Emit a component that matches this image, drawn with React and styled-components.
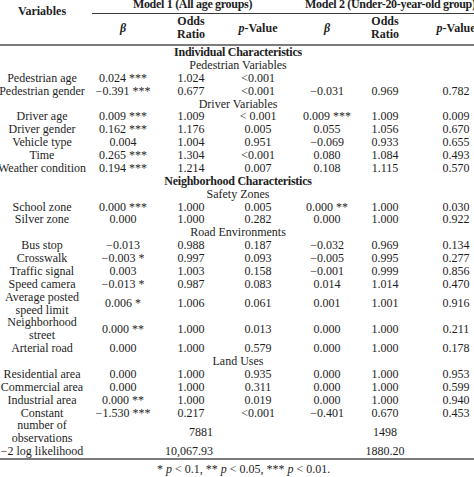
import styled, { createGlobalStyle } from "styled-components";

const GlobalStyle = createGlobalStyle`
  html, body {
    margin: 0;
    padding: 0;
    background: #fff;
    overflow: hidden;
  }
`;

// column widths, left to right (table starts 3px off the left edge)
const widths = [90, 72, 64, 70, 68, 48, 94];

const rows = [
  { section: "Individual Characteristics", bold: true },
  { section: "Pedestrian Variables" },
  { label: "Pedestrian age", m1: ["0.024 ***", "1.024", "<0.001"], m2: ["", "", ""] },
  { label: "Pedestrian gender", m1: ["−0.391 ***", "0.677", "<0.001"], m2: ["−0.031", "0.969", "0.782"] },
  { section: "Driver Variables" },
  { label: "Driver age", m1: ["0.009 ***", "1.009", "< 0.001"], m2: ["0.009 ***", "1.009", "0.009"] },
  { label: "Driver gender", m1: ["0.162 ***", "1.176", "0.005"], m2: ["0.055", "1.056", "0.670"] },
  { label: "Vehicle type", m1: ["0.004", "1.004", "0.951"], m2: ["−0.069", "0.933", "0.655"] },
  { label: "Time", m1: ["0.265 ***", "1.304", "<0.001"], m2: ["0.080", "1.084", "0.493"] },
  { label: "Weather condition", m1: ["0.194 ***", "1.214", "0.007"], m2: ["0.108", "1.115", "0.570"] },
  { section: "Neighborhood Characteristics", bold: true },
  { section: "Safety Zones" },
  { label: "School zone", m1: ["0.000 ***", "1.000", "0.005"], m2: ["0.000 **", "1.000", "0.030"] },
  { label: "Silver zone", m1: ["0.000", "1.000", "0.282"], m2: ["0.000", "1.000", "0.922"] },
  { section: "Road Environments" },
  { label: "Bus stop", m1: ["−0.013", "0.988", "0.187"], m2: ["−0.032", "0.969", "0.134"] },
  { label: "Crosswalk", m1: ["−0.003 *", "0.997", "0.093"], m2: ["−0.005", "0.995", "0.277"] },
  { label: "Traffic signal", m1: ["0.003", "1.003", "0.158"], m2: ["−0.001", "0.999", "0.856"] },
  { label: "Speed camera", m1: ["−0.013 *", "0.987", "0.083"], m2: ["0.014", "1.014", "0.470"] },
  { label: ["Average posted", "speed limit"], m1: ["0.006 *", "1.006", "0.061"], m2: ["0.001", "1.001", "0.916"] },
  { label: ["Neighborhood", "street"], m1: ["0.000 **", "1.000", "0.013"], m2: ["0.000", "1.000", "0.211"] },
  { label: "Arterial road", m1: ["0.000", "1.000", "0.579"], m2: ["0.000", "1.000", "0.178"] },
  { section: "Land Uses" },
  { label: "Residential area", m1: ["0.000", "1.000", "0.935"], m2: ["0.000", "1.000", "0.953"] },
  { label: "Commercial area", m1: ["0.000", "1.000", "0.311"], m2: ["0.000", "1.000", "0.599"] },
  { label: "Industrial area", m1: ["0.000 **", "1.000", "0.019"], m2: ["0.000", "1.000", "0.940"] },
  { label: "Constant", m1: ["−1.530 ***", "0.217", "<0.001"], m2: ["−0.401", "0.670", "0.453"] },
  { label: ["number of", "observations"], summary: ["7881", "1498"] },
  { label: "−2 log likelihood", summary: ["10,067.93", "1880.20"] },
];

const App = () => {
  return (
    <Frame>
      <GlobalStyle />
      <Table>
        <colgroup>
          {widths.map((w, i) => (
            <Col key={i} $w={w} />
          ))}
        </colgroup>
        <thead>
          <tr>
            <VarHead rowSpan={2}>Variables</VarHead>
            <GroupHead colSpan={3}>
              <ModelTitle $inset={5}>Model 1 (All age groups)</ModelTitle>
            </GroupHead>
            <GroupHead colSpan={3}>
              <ModelTitle $inset={0} $lead={12}>Model 2 (Under-20-year-old group)</ModelTitle>
            </GroupHead>
          </tr>
          <tr>
            <HeadCell><Ital>β</Ital></HeadCell>
            <HeadCell>Odds<br />Ratio</HeadCell>
            <HeadCell><Ital>p</Ital>-Value</HeadCell>
            <HeadCell><Ital>β</Ital></HeadCell>
            <HeadCell>Odds<br />Ratio</HeadCell>
            <HeadCell><Ital>p</Ital>-Value</HeadCell>
          </tr>
        </thead>
        <tbody>
          {rows.map((r, i) => {
            if (r.section) {
              return (
                <tr key={i}>
                  <SectionCell colSpan={7} $bold={r.bold}>{r.section}</SectionCell>
                </tr>
              );
            }
            const label = Array.isArray(r.label) ? (
              <>
                {r.label[0]}
                <br />
                {r.label[1]}
              </>
            ) : (
              r.label
            );
            if (r.summary) {
              return (
                <tr key={i}>
                  <Cell>{label}</Cell>
                  <Cell />
                  <Cell $align="right" $pr={10}>{r.summary[0]}</Cell>
                  <Cell />
                  <Cell />
                  <Cell>{r.summary[1]}</Cell>
                  <Cell />
                </tr>
              );
            }
            return (
              <tr key={i}>
                <Cell>{label}</Cell>
                {r.m1.map((v, j) => (
                  <Cell key={"a" + j}>{v}</Cell>
                ))}
                {r.m2.map((v, j) => (
                  <Cell key={"b" + j}>{v}</Cell>
                ))}
              </tr>
            );
          })}
          <tr>
            <FootCell colSpan={7}>
              * <Ital>p</Ital> &lt; 0.1, ** <Ital>p</Ital> &lt; 0.05, *** <Ital>p</Ital> &lt; 0.01.
            </FootCell>
          </tr>
        </tbody>
      </Table>
    </Frame>
  );
};

export default App;

const Frame = styled.div`
  width: 474px;
  height: 477px;
  overflow: hidden;
  background: #fff;
  font-family: "Liberation Serif", "Times New Roman", serif;
  font-size: 12px;
  color: #1e1e1e;
`;

const Table = styled.table`
  border-collapse: separate;
  border-spacing: 0;
  table-layout: fixed;
  width: ${widths.reduce((a, b) => a + b, 0)}px;
  margin: -2px 0 0 -3px;
`;

const Col = styled.col`
  width: ${(p) => p.$w}px;
`;

const HeadCell = styled.th`
  font-weight: bold;
  line-height: 13px;
  padding: 1px 0 3px;
  text-align: center;
  vertical-align: middle;
  white-space: nowrap;
  border-bottom: 2px solid #7c7c7c;
`;

const VarHead = styled(HeadCell)`
  vertical-align: top;
  padding: 7px 0 0;
`;

const GroupHead = styled.th`
  padding: 0;
  font-weight: bold;
  white-space: nowrap;
`;

const ModelTitle = styled.div`
  line-height: 13px;
  padding: 0 0 2px ${(p) => p.$lead || 0}px;
  text-align: ${(p) => (p.$lead ? "left" : "center")};
  letter-spacing: -0.3px;
  margin-left: ${(p) => p.$inset}px;
  border-bottom: 1px solid #3a3a3a;
`;

const Ital = styled.i`
  font-style: italic;
`;

const Cell = styled.td`
  padding: 0 ${(p) => p.$pr || 0}px 0 0;
  line-height: 12.87px;
  text-align: ${(p) => p.$align || "center"};
  vertical-align: middle;
  white-space: nowrap;
`;

const SectionCell = styled.td`
  padding: 0 24px 0 0;
  line-height: 12.87px;
  text-align: center;
  white-space: nowrap;
  font-weight: ${(p) => (p.$bold ? "bold" : "normal")};
  letter-spacing: ${(p) => (p.$bold ? "-0.25px" : "0")};
`;

const FootCell = styled.td`
  padding: 3px 0 0 160px;
  line-height: 13px;
  text-align: left;
  white-space: nowrap;
  border-top: 2px solid #7c7c7c;
`;
